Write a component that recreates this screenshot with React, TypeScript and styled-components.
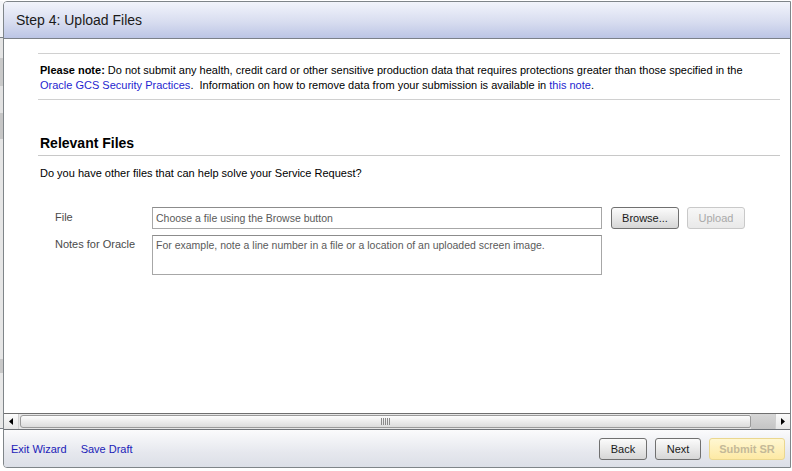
import styled, { createGlobalStyle } from "styled-components";

const GlobalStyle = createGlobalStyle`
  html, body {
    margin: 0;
    padding: 0;
    background: #ffffff;
  }
  * {
    box-sizing: border-box;
  }
  body {
    font-family: "Liberation Sans", Arial, sans-serif;
    font-size: 11px;
    color: #000000;
  }
`;

const Page = styled.div`
  width: 792px;
  height: 471px;
  display: flex;
  padding-top: 1px;
  overflow: hidden;
`;

const LeftEdge = styled.div`
  width: 3px;
  height: 467px;
  display: flex;
  flex-direction: column;
`;

const EdgePiece = styled.div<{ $h: number; $bg: string; $line?: boolean }>`
  height: ${(p) => p.$h}px;
  flex-shrink: 0;
  background: ${(p) => p.$bg};
  border-bottom: ${(p) => (p.$line ? "1px solid #7a7f87" : "none")};
`;

const Panel = styled.div`
  width: 788px;
  height: 467px;
  display: flex;
  flex-direction: column;
  border: 1px solid #7f8589;
  border-radius: 4px 0 0 4px;
  overflow: hidden;
`;

const Header = styled.div`
  height: 37px;
  flex-shrink: 0;
  display: flex;
  align-items: center;
  padding-left: 12px;
  background: linear-gradient(#f2f4fb, #d8ddf0 55%, #bcc5e5);
  border-bottom: 1px solid #7c8189;
  font-size: 14px;
  color: #1a1a1a;
`;

const Body = styled.div`
  flex: 1;
  background: #ffffff;
  padding: 14px 10px 0 34px;
`;

const Note = styled.div`
  border-top: 1px solid #d0d0d0;
  border-bottom: 1px solid #d0d0d0;
  padding: 9px 2px 6px;
  line-height: 15px;
`;

const Link = styled.a`
  color: #1f1fd0;
  text-decoration: none;
  cursor: pointer;
`;

const SectionTitle = styled.div`
  margin-top: 34px;
  padding: 0 2px 3px;
  border-bottom: 1px solid #c8c8c8;
  font-size: 14px;
  font-weight: bold;
  line-height: 18px;
`;

const Question = styled.div`
  margin-top: 10px;
  padding-left: 2px;
  line-height: 15px;
`;

const Form = styled.div`
  margin-top: 26px;
  padding-left: 17px;
  display: flex;
  flex-direction: column;
  gap: 6px;
`;

const Row = styled.div`
  display: flex;
  align-items: flex-start;
`;

const Label = styled.div<{ $pt: number }>`
  width: 97px;
  padding-top: ${(p) => p.$pt}px;
  color: #4a4a4a;
  line-height: 14px;
`;

const Field = styled.div<{ $h: number }>`
  width: 450px;
  height: ${(p) => p.$h}px;
  border: 1px solid #a7a7a7;
  border-top-color: #8c8c8c;
  padding: ${(p) => (p.$h > 30 ? "3px 3px" : "0 3px")};
  display: flex;
  align-items: ${(p) => (p.$h > 30 ? "flex-start" : "center")};
  color: #5a5a5a;
  font-size: 10.5px;
`;

const Button = styled.button<{ $w: number; $disabled?: boolean; $primary?: boolean }>`
  width: ${(p) => p.$w}px;
  height: 22px;
  margin-left: 8px;
  padding: 0;
  border-radius: 3px;
  font-family: "Liberation Sans", Arial, sans-serif;
  font-size: 11px;
  font-weight: ${(p) => (p.$primary ? "bold" : "normal")};
  cursor: default;
  border: 1px solid
    ${(p) => (p.$primary ? "#ead78f" : p.$disabled ? "#c9c9c9" : "#707070")};
  color: ${(p) => (p.$primary ? "#c4b998" : p.$disabled ? "#a9a9a9" : "#1a1a1a")};
  background: ${(p) =>
    p.$primary
      ? "linear-gradient(#fff7d2, #fde9a4)"
      : p.$disabled
      ? "linear-gradient(#f7f7f7, #e9e9e9)"
      : "linear-gradient(#fbfbfb, #e9e9e9 50%, #d6d6d6)"};
`;

const ScrollBar = styled.div`
  height: 16px;
  flex-shrink: 0;
  border-top: 1px solid #6f6f6f;
  background: #e6e6e6;
  display: flex;
  align-items: stretch;
`;

const Arrow = styled.div<{ $right?: boolean }>`
  width: 15px;
  display: flex;
  align-items: center;
  justify-content: center;
  background: linear-gradient(#fbfbfb, #e6e6e6);
  border-right: ${(p) => (p.$right ? "none" : "1px solid #d0d0d0")};
  border-left: ${(p) => (p.$right ? "1px solid #d0d0d0" : "none")};
`;

const Thumb = styled.div`
  width: 731px;
  margin: 1px 0 1px 1px;
  border: 1px solid #9a9a9a;
  border-radius: 3px 2px 2px 3px;
  background: linear-gradient(#fdfdfd, #ececec 50%, #dcdcdc);
  display: flex;
  align-items: center;
  justify-content: center;
`;

const Track = styled.div`
  flex: 1;
  background: linear-gradient(#d7d7d7, #c4c4c4);
`;

const Footer = styled.div`
  height: 38px;
  flex-shrink: 0;
  border-top: 1px solid #6f7378;
  background: linear-gradient(#fbfbfc, #e6e8ee 60%, #dcdfe7);
  display: flex;
  align-items: center;
  padding: 1px 5px 0 7px;
`;

const FooterLink = styled(Link)`
  font-size: 11px;
  color: #1c1cb8;
  margin-right: 14px;
`;

const Spacer = styled.div`
  flex: 1;
`;

const grip = [0, 2, 4, 6, 8];

export default function App() {
  return (
    <>
      <GlobalStyle />
      <Page>
        <LeftEdge>
          <EdgePiece $h={37} $bg="#f4f5f8" $line />
          <EdgePiece $h={20} $bg="#e4e4e4" />
          <EdgePiece $h={28} $bg="#c9c9c9" />
          <EdgePiece $h={27} $bg="#e2e2e2" />
          <EdgePiece $h={26} $bg="#c6c6c6" />
          <EdgePiece $h={220} $bg="#e6e6e6" />
          <EdgePiece $h={14} $bg="#c8c8c8" />
          <EdgePiece $h={56} $bg="#e8e8e8" $line />
          <EdgePiece $h={38} $bg="#ffffff" />
        </LeftEdge>
        <Panel>
          <Header>Step 4: Upload Files</Header>
          <Body>
            <Note>
              <b>Please note:</b> Do not submit any health, credit card or other
              sensitive production data that requires protections greater than
              those specified in the <Link>Oracle GCS Security Practices</Link>.
              &nbsp;Information on how to remove data from your submission is
              available in <Link>this note</Link>.
            </Note>
            <SectionTitle>Relevant Files</SectionTitle>
            <Question>
              Do you have other files that can help solve your Service Request?
            </Question>
            <Form>
              <Row>
                <Label $pt={3}>File</Label>
                <Field $h={22}>Choose a file using the Browse button</Field>
                <Button $w={68} style={{ marginLeft: 9 }}>
                  Browse...
                </Button>
                <Button $w={58} $disabled>
                  Upload
                </Button>
              </Row>
              <Row>
                <Label $pt={2}>Notes for Oracle</Label>
                <Field $h={40}>
                  For example, note a line number in a file or a location of an
                  uploaded screen image.
                </Field>
              </Row>
            </Form>
          </Body>
          <ScrollBar>
            <Arrow>
              <svg width="4" height="7" viewBox="0 0 4 7">
                <polygon points="4,0 0,3.5 4,7" fill="#000" />
              </svg>
            </Arrow>
            <Thumb>
              <svg width="10" height="7" viewBox="0 0 10 7">
                {grip.map((x) => (
                  <rect key={x} x={x} y={0} width={1} height={7} fill="#8a8a8a" />
                ))}
              </svg>
            </Thumb>
            <Track />
            <Arrow $right>
              <svg width="4" height="7" viewBox="0 0 4 7">
                <polygon points="0,0 4,3.5 0,7" fill="#000" />
              </svg>
            </Arrow>
          </ScrollBar>
          <Footer>
            <FooterLink>Exit Wizard</FooterLink>
            <FooterLink>Save Draft</FooterLink>
            <Spacer />
            <Button $w={48}>Back</Button>
            <Button $w={46}>Next</Button>
            <Button $w={76} $primary>
              Submit SR
            </Button>
          </Footer>
        </Panel>
      </Page>
    </>
  );
}
